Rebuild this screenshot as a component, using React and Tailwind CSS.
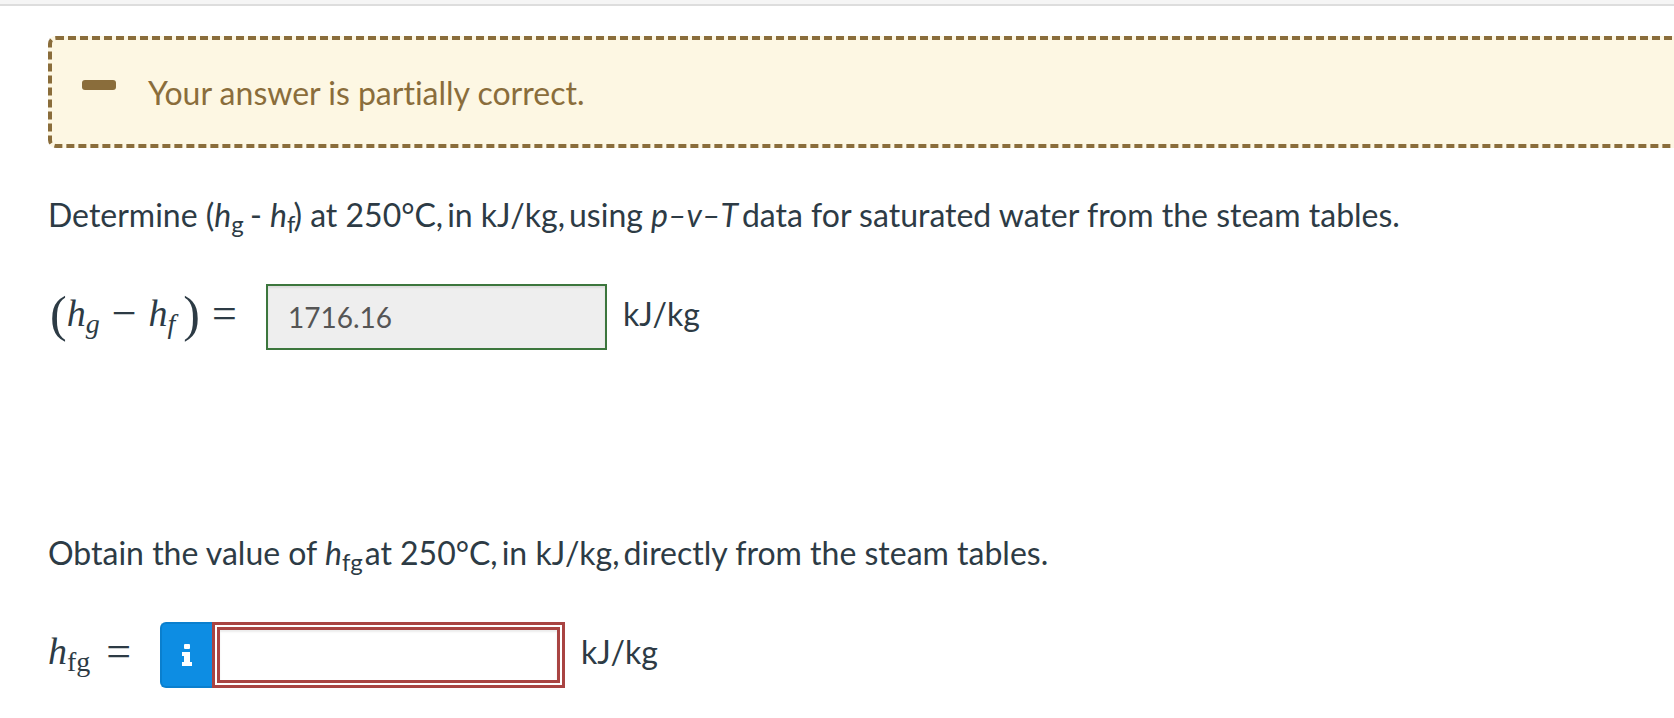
import React, { useState } from "react";

const MathVar = ({ children }) => <i className="text-[38px]">{children}</i>;

const MathSub = ({ children }) => <sub className="text-[28px]">{children}</sub>;

const Paren = ({ children }) => <span className="text-[50px]">{children}</span>;

const TextSub = ({ children }) => <sub className="-mr-0.5">{children}</sub>;

const Alert = ({ children }) => (
  <div role="alert" className="flex items-center h-28 -mr-16 pt-0.5 pl-[30px] rounded-lg border-4 border-dashed border-[#8a6d3b] bg-[#fdf7e3] text-[#8a6d3b]">
    <svg viewBox="0 0 34 10" className="w-[34px] h-[10px] mr-8 mb-4 fill-current" aria-hidden="true">
      <rect width="34" height="10" rx="3" />
    </svg>
    <p>{children}</p>
  </div>
);

const App = () => {
  const [difference, setDifference] = useState("1716.16");
  const [direct, setDirect] = useState("");

  return (
    <div className="overflow-hidden bg-white font-['Lato',sans-serif] text-[32px] leading-[48px] text-[#2d3b45] [font-variant-ligatures:none]">
      <div className="h-1.5 border-b-2 border-[#dddddd] bg-[#f5f5f5]" />

      <main className="px-12 pt-[30px] pb-[30px]">
        <Alert>Your answer is partially correct.</Alert>

        <section className="mt-[43px]">
          <p>
            Determine (<i>h</i><TextSub>g</TextSub> - <i>h</i><TextSub>f</TextSub>) at 250°C,{"\u2009"}in kJ/kg,{"\u2009"}using{" "}
            <i>p–v–T</i>{"\u2009"}data for saturated water from the steam tables.
          </p>
          <div className="flex items-start mt-[45px]">
            <label htmlFor="difference" className="flex items-center w-[218px] h-12 mt-1.5 pl-0.5 font-['Liberation_Serif',serif]">
              <Paren>(</Paren>
              <span>
                <MathVar>h</MathVar><MathSub><i>g</i></MathSub>
              </span>
              <span className="mx-3 text-[44px]">−</span>
              <span className="mr-2">
                <MathVar>h</MathVar><MathSub><i>f</i></MathSub>
              </span>
              <Paren>)</Paren>
              <span className="ml-3 text-[44px]">=</span>
            </label>
            <input
              id="difference"
              type="text"
              readOnly
              value={difference}
              onChange={(e) => setDifference(e.target.value)}
              className="w-[341px] h-[66px] px-5 border-2 border-[#3c763d] bg-[#eeeeee] text-[28px] text-[#555555] shadow-[inset_0_2px_2px_rgba(0,0,0,0.075)]"
            />
            <span className="ml-4 mt-1.5">kJ/kg</span>
          </div>
        </section>

        <section className="mt-[179px]">
          <p>
            Obtain the value of <i>h</i><TextSub>fg</TextSub>{"\u2009"}at 250°C,{"\u2009"}in kJ/kg,{"\u2009"}directly from the steam tables.
          </p>
          <div className="flex items-start mt-[45px]">
            <label htmlFor="direct" className="flex items-center w-28 h-12 mt-1.5 font-['Liberation_Serif',serif]">
              <span>
                <MathVar>h</MathVar><MathSub>fg</MathSub>
              </span>
              <span className="ml-4 text-[44px]">=</span>
            </label>
            <button
              type="button"
              aria-label="Information"
              className="flex items-center justify-center w-[52px] h-[66px] rounded-l-md border-2 border-r-0 border-[#0a7fce] bg-[#0d8de3] text-white"
            >
              <svg viewBox="0 0 10 22" className="w-[10px] h-[22px] fill-current" aria-hidden="true">
                <rect x="2" width="6" height="5" rx="1" />
                <path d="M0 8h8v10h2v4H0v-4h2v-6H0z" />
              </svg>
            </button>
            <input
              id="direct"
              type="text"
              value={direct}
              onChange={(e) => setDirect(e.target.value)}
              className="w-[353px] h-[66px] px-4 border-8 border-double border-[#a94442] bg-white text-[28px] text-[#555555] shadow-[inset_0_2px_2px_rgba(0,0,0,0.075)]"
            />
            <span className="ml-4 mt-1.5">kJ/kg</span>
          </div>
        </section>
      </main>
    </div>
  );
};

export default App;
